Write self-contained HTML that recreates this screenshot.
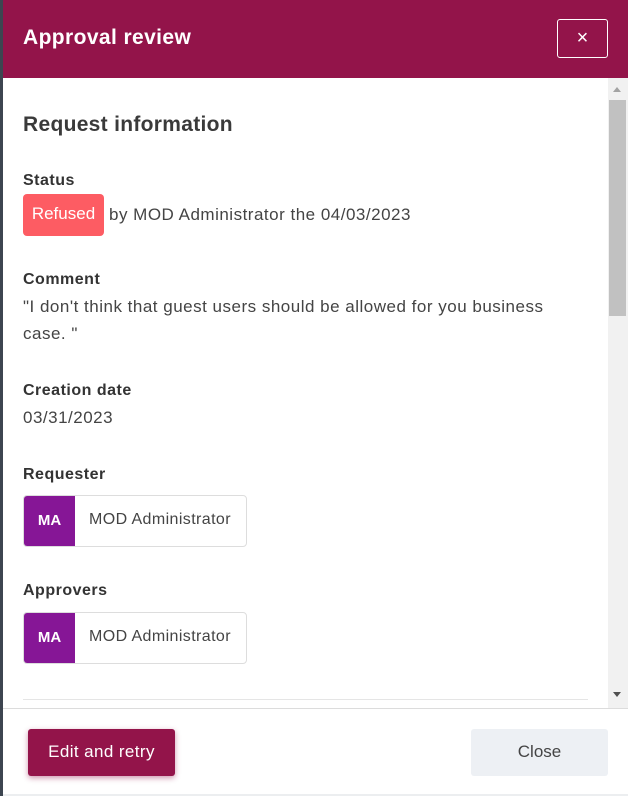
<!DOCTYPE html>
<html><head><style>
*{box-sizing:border-box;margin:0;padding:0}
body{width:628px;height:796px;overflow:hidden;background:#fff;font-family:"Liberation Sans",sans-serif;color:#333;position:relative}
.lstrip{position:absolute;left:0;top:0;width:3px;height:796px;background:#3d4550}
.hdr{position:absolute;left:3px;top:0;width:625px;height:78px;background:#93144a}
.hdr h1{position:absolute;left:20px;top:26px;font-size:21px;font-weight:bold;color:#fff;letter-spacing:0.4px}
.xb{position:absolute;left:554px;top:19px;width:51px;height:39px;border:1px solid #fff;border-radius:3px;color:#fff;font-size:20px;text-align:center;line-height:36px}
.sb{position:absolute;left:608px;top:78px;width:20px;height:630px;background:#f1f1f1}
.thumb{position:absolute;left:609px;top:100px;width:17px;height:216px;background:#c1c1c1}
.up{position:absolute;left:613px;top:87px;border:4px solid transparent;border-bottom:5px solid #a3a3a3;border-top:0}
.dn{position:absolute;left:613px;top:692px;border:4px solid transparent;border-top:5px solid #505050;border-bottom:0}
.t{position:absolute;left:23px;white-space:nowrap}
.lbl{font-size:16px;font-weight:bold;color:#333;letter-spacing:0.5px}
.v{font-size:17px;color:#444;letter-spacing:0.5px}
.badge{position:absolute;left:23px;top:194px;width:81px;height:42px;background:#fd5c63;border-radius:4px;color:#fff;font-size:17px;text-align:center;line-height:40px}
.card{position:absolute;left:23px;width:224px;height:52px;border:1px solid #ddd;border-radius:4px;overflow:hidden}
.av{position:absolute;left:0;top:0;width:51px;height:52px;background:#861696;color:#fff;font-weight:bold;font-size:15px;text-align:center;line-height:50px}
.cn{position:absolute;left:65px;top:15px;font-size:16px;color:#444;letter-spacing:0.4px}
.hr{position:absolute;left:23px;top:699px;width:565px;height:1px;background:#e5e5e5}
.fb{position:absolute;left:3px;top:708px;width:625px;height:1px;background:#dcdcdc}
.edit{position:absolute;left:28px;top:729px;width:147px;height:47px;background:#93144a;border-radius:3px;color:#fff;font-size:17px;text-align:center;line-height:46px;box-shadow:0 2px 6px rgba(147,20,74,.45);letter-spacing:0.4px}
.close{position:absolute;left:471px;top:729px;width:137px;height:47px;background:#edf0f4;border-radius:3px;color:#444;font-size:17px;text-align:center;line-height:46px}
.bl{position:absolute;left:3px;top:794px;width:625px;height:2px;background:#eceef0}
</style></head><body>
<div class="lstrip"></div>
<div class="hdr"><h1>Approval review</h1><div class="xb">×</div></div>
<div class="sb"></div><div class="thumb"></div><div class="up"></div><div class="dn"></div>
<div class="t" style="top:113px;font-size:21px;font-weight:bold;color:#3a3a3a;letter-spacing:0.3px">Request information</div>
<div class="t lbl" style="top:172px">Status</div>
<div class="badge">Refused</div>
<div class="t v" style="left:109px;top:205px">by MOD Administrator the 04/03/2023</div>
<div class="t lbl" style="top:271px">Comment</div>
<div class="t v" style="top:297px">"I don't think that guest users should be allowed for you business</div>
<div class="t v" style="top:324px">case. "</div>
<div class="t lbl" style="top:382px">Creation date</div>
<div class="t v" style="top:408px">03/31/2023</div>
<div class="t lbl" style="top:466px">Requester</div>
<div class="card" style="top:495px"><div class="av">MA</div><div class="cn">MOD Administrator</div></div>
<div class="t lbl" style="top:582px">Approvers</div>
<div class="card" style="top:612px"><div class="av">MA</div><div class="cn">MOD Administrator</div></div>
<div class="hr"></div>
<div class="fb"></div>
<div class="edit">Edit and retry</div>
<div class="close">Close</div>
<div class="bl"></div>
</body></html>
